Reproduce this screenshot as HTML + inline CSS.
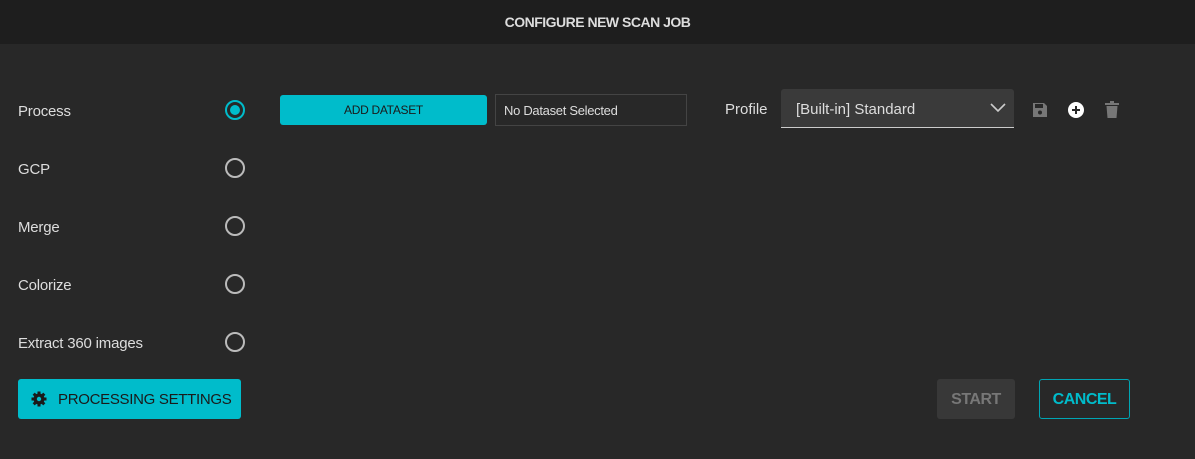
<!DOCTYPE html>
<html><head><style>
*{margin:0;padding:0;box-sizing:border-box}
body{width:1195px;height:459px;background:#282828;font-family:"Liberation Sans",sans-serif;position:relative;overflow:hidden;color:#ddd}
.hdr{position:absolute;left:0;top:0;width:1195px;height:44px;background:#1e1e1e;color:#ddd;font-weight:bold;font-size:14px;text-align:center;line-height:44px;letter-spacing:-0.5px}
.lbl{position:absolute;left:18px;font-size:15px;color:#ddd;letter-spacing:-0.2px}
.rad{position:absolute;left:225px;width:20px;height:20px;border:2px solid #bbb;border-radius:50%}
.rad.on{border-color:#00bccb}
.rad.on::after{content:"";position:absolute;left:3px;top:3px;width:10px;height:10px;border-radius:50%;background:#00bccb}
.abs{position:absolute;white-space:nowrap}
</style></head><body>
<div class="hdr">CONFIGURE NEW SCAN JOB</div>
<div class="lbl" style="top:103px">Process</div><div class="rad on" style="top:100px"></div>
<div class="lbl" style="top:161px">GCP</div><div class="rad" style="top:158px"></div>
<div class="lbl" style="top:219px">Merge</div><div class="rad" style="top:216px"></div>
<div class="lbl" style="top:277px">Colorize</div><div class="rad" style="top:274px"></div>
<div class="lbl" style="top:335px">Extract 360 images</div><div class="rad" style="top:332px"></div>

<div class="abs" style="left:280px;top:95px;width:207px;height:30px;background:#00bccb;border-radius:3px;color:#1a1a1a;font-size:12px;text-align:center;line-height:31px;letter-spacing:-0.3px">ADD DATASET</div>
<div class="abs" style="left:495px;top:94px;width:192px;height:32px;border:1px solid #444;color:#ddd;font-size:13px;line-height:31px;padding-left:8px;letter-spacing:-0.3px">No Dataset Selected</div>

<div class="abs" style="left:725px;top:101px;font-size:15px;color:#ddd">Profile</div>
<div class="abs" style="left:781px;top:89px;width:233px;height:39px;background:#3a3a3a;border-radius:3px 3px 0 0;border-bottom:1px solid #ccc;font-size:15px;color:#ddd;line-height:42px;padding-left:15px">[Built-in] Standard
<svg style="position:absolute;right:8px;top:14px" width="16" height="10" viewBox="0 0 16 10"><path d="M1 1l7 7 7-7" fill="none" stroke="#ccc" stroke-width="1.6"/></svg></div>
<svg class="abs" style="left:1032px;top:102px" width="16" height="16" viewBox="0 0 16 16"><path d="M1 1h11l3 3v11H1z" fill="#777"/><rect x="3" y="2" width="8" height="4" fill="#282828"/><circle cx="8" cy="10.5" r="2" fill="#282828"/></svg>
<svg class="abs" style="left:1067px;top:101px" width="18" height="18" viewBox="0 0 18 18"><circle cx="9" cy="9" r="8" fill="#fff"/><path d="M9 5v8M5 9h8" stroke="#282828" stroke-width="2"/></svg>
<svg class="abs" style="left:1105px;top:101px" width="14" height="17" viewBox="0 0 14 17"><rect x="0" y="2" width="14" height="2" fill="#777"/><rect x="5" y="0" width="4" height="2" fill="#777"/><path d="M1.5 5h11l-1 12h-9z" fill="#777"/></svg>

<div class="abs" style="left:18px;top:379px;width:223px;height:40px;background:#00bccb;border-radius:3px;color:#1a1a1a;font-size:15px;line-height:42px;padding-left:40px;letter-spacing:-0.3px">PROCESSING SETTINGS
<svg style="position:absolute;left:13px;top:12px" width="16" height="16" viewBox="0 0 16 16"><g fill="#1a1a1a"><circle cx="8" cy="8" r="5.5"/><rect x="6.5" y="0.5" width="3" height="15"/><rect x="0.5" y="6.5" width="15" height="3"/><rect x="6.5" y="0.5" width="3" height="15" transform="rotate(45 8 8)"/><rect x="6.5" y="0.5" width="3" height="15" transform="rotate(-45 8 8)"/></g><circle cx="8" cy="8" r="2.2" fill="#00bccb"/></svg></div>

<div class="abs" style="left:937px;top:379px;width:78px;height:40px;background:#383838;border-radius:3px;color:#777;font-weight:bold;font-size:16px;text-align:center;line-height:42px;letter-spacing:-0.5px">START</div>
<div class="abs" style="left:1039px;top:379px;width:91px;height:40px;border:1px solid #00a5b3;border-radius:3px;color:#00bccb;font-weight:bold;font-size:16px;text-align:center;line-height:40px;letter-spacing:-0.5px">CANCEL</div>
</body></html>
